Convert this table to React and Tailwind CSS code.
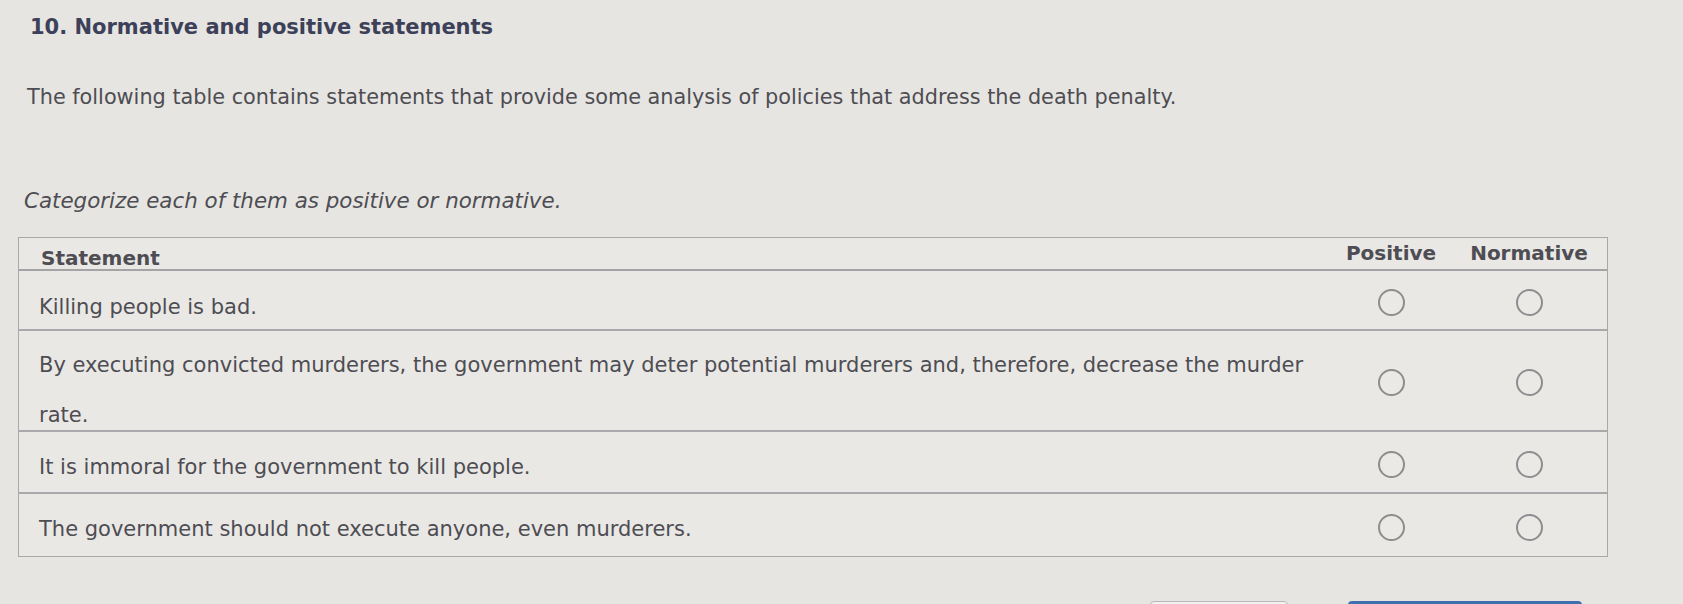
import React from "react";

const rows = [
  { text: "Killing people is bad.", h: "h-[60px]", pt: "pt-[11px]" },
  { text: "By executing convicted murderers, the government may deter potential murderers and, therefore, decrease the murder rate.", h: "h-[101px]", pt: "pt-[9px]" },
  { text: "It is immoral for the government to kill people.", h: "h-[62px]", pt: "pt-[10px]" },
  { text: "The government should not execute anyone, even murderers.", h: "h-[62px]", pt: "pt-[10px]" },
];

function Radio() {
  return <span className="block w-[27px] h-[27px] rounded-full border-2 border-[#8d8d8f] bg-[#ebe9e6]" />;
}

export default function App() {
  return (
    <div
      className="w-[1683px] h-[604px] overflow-hidden bg-[#e7e5e1] text-[#4d4d53]"
      style={{ fontFamily: '"DejaVu Sans", Verdana, sans-serif' }}
    >
      <div className="pl-[30px] pt-[13px]">
        <h1 className="text-[21px] font-bold leading-[28px] text-[#3c4159]">10. Normative and positive statements</h1>
      </div>
      <p className="pl-[27px] mt-[42px] text-[20.8px] leading-[28px]">
        The following table contains statements that provide some analysis of policies that address the death penalty.
      </p>
      <p className="pl-[24px] mt-[76px] text-[21.4px] leading-[28px] italic">
        Categorize each of them as positive or normative.
      </p>
      <div className="ml-[18px] mt-[22px] w-[1590px] border border-[#a9a9ab] bg-[#eae8e5]">
        <div className="flex h-[33px] border-b-2 border-[#a4a4a6] font-bold text-[20px]">
          <div className="flex-1 pl-[22px] pt-[5px]">Statement</div>
          <div className="w-[120px] flex justify-center">Positive</div>
          <div className="w-[156px] flex justify-center">Normative</div>
        </div>
        {rows.map((r, i) => (
          <div key={i} className={`flex ${r.h} ${i < rows.length - 1 ? "border-b-2 border-[#a9a9ab]" : ""}`}>
            <div className={`flex-1 min-w-0 pl-[20px] pr-0 ${r.pt} text-[21px] leading-[50px]`}>{r.text}</div>
            <div className="w-[120px] shrink-0 flex justify-center items-center pt-[4px]">
              <Radio />
            </div>
            <div className="w-[156px] shrink-0 flex justify-center items-center pt-[4px]">
              <Radio />
            </div>
          </div>
        ))}
      </div>
      <div className="flex gap-[60px] pl-[1150px] mt-[44px]">
        <div className="w-[138px] h-[40px] rounded-[4px] border border-[#b8b8ba] bg-[#f2f1ef]" />
        <div className="w-[234px] h-[40px] rounded-[4px] bg-[#3f6fae]" />
      </div>
    </div>
  );
}
